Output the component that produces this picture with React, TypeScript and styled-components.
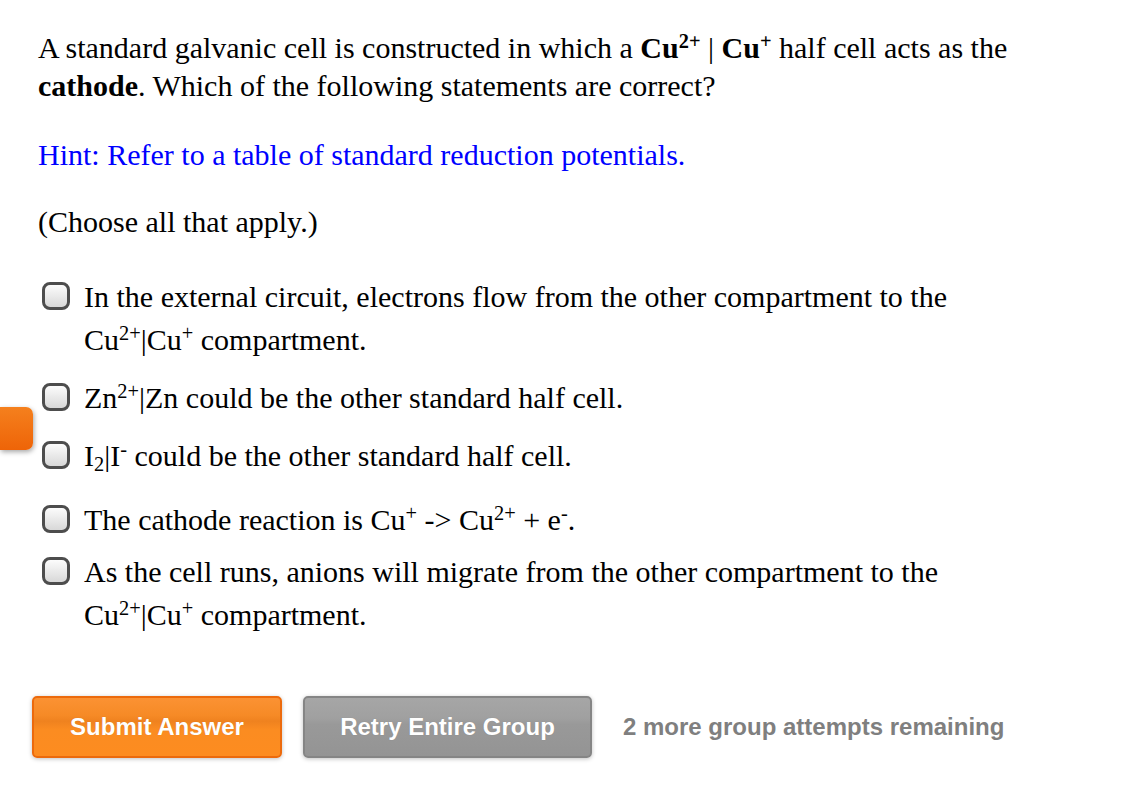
import React from "react";
import styled, { createGlobalStyle } from "styled-components";

const Global = createGlobalStyle`
  html, body { margin: 0; padding: 0; background: #fff; }
  body { font-family: "Liberation Serif", "Times New Roman", serif; color: #000; }
`;

const Page = styled.div`
  position: relative;
  width: 1129px;
  min-height: 804px;
  padding: 29px 0 0 38px;
  box-sizing: border-box;
`;

const Content = styled.div`
  width: 1005px;
  font-size: 30px;
`;

const Para = styled.p<{ $color?: string; $mt?: number }>`
  margin: ${(p) => p.$mt ?? 0}px 0 0 0;
  line-height: 38px;
  color: ${(p) => p.$color ?? "#000"};
`;

const Sup = styled.sup`
  font-size: 0.68em;
  line-height: 0;
  vertical-align: 0.5em;
`;

const Sub = styled.sub`
  font-size: 0.68em;
  line-height: 0;
  vertical-align: -0.25em;
`;

const Options = styled.div`
  display: flex;
  flex-direction: column;
  gap: 15px;
  margin-top: 34px;
`;

const Option = styled.label<{ $mt?: number }>`
  display: flex;
  align-items: flex-start;
  gap: 14px;
  margin-left: 4px;
  margin-top: ${(p) => p.$mt ?? 0}px;
  line-height: 43px;
`;

const Box = styled.span`
  flex: none;
  width: 28px;
  height: 28px;
  margin-top: 7px;
  box-sizing: border-box;
  border: 3px solid #4d4d4d;
  border-radius: 8px;
  background: linear-gradient(#fcfcfc, #d8d8d8);
`;

const OptText = styled.span`
  flex: 1;
`;

const Actions = styled.div`
  display: flex;
  align-items: center;
  margin-top: 60px;
  margin-left: -6px;
`;

const Button = styled.button<{ $variant: "orange" | "gray"; $w: number }>`
  width: ${(p) => p.$w}px;
  height: 62px;
  border-radius: 5px;
  font-family: "Liberation Sans", Arial, sans-serif;
  font-weight: bold;
  font-size: 24px;
  color: #fff;
  cursor: pointer;
  box-shadow: 0 1px 4px rgba(0, 0, 0, 0.25);
  text-shadow: 0 0 1px rgba(0, 0, 0, 0.15);
  border: 2px solid ${(p) => (p.$variant === "orange" ? "#ec6a0c" : "#858585")};
  background: ${(p) =>
    p.$variant === "orange"
      ? "linear-gradient(#fb9233 0%, #f68a26 30%, #ef821f 40%, #fb8c21 55%, #fd8c20 100%)"
      : "linear-gradient(#a6a6a6 0%, #a0a0a0 35%, #999 45%, #949494 100%)"};
  margin-right: ${(p) => (p.$variant === "orange" ? 21 : 31)}px;
`;

const Remaining = styled.span`
  font-family: "Liberation Sans", Arial, sans-serif;
  font-weight: bold;
  font-size: 24px;
  color: #7f7f7f;
`;

const SideTab = styled.div`
  position: absolute;
  left: 0;
  top: 407px;
  width: 33px;
  height: 43px;
  border-radius: 0 7px 7px 0;
  background: linear-gradient(#f5801d, #ee6408);
  box-shadow: 1px 2px 5px rgba(0, 0, 0, 0.35);
`;

export default function App() {
  return (
    <Page>
      <Global />
      <SideTab />
      <Content>
        <Para>
          A standard galvanic cell is constructed in which a{" "}
          <b>
            Cu<Sup>2+</Sup>
          </b>{" "}
          |{" "}
          <b>
            Cu<Sup>+</Sup>
          </b>{" "}
          half cell acts as the <b>cathode</b>. Which of the following statements are correct?
        </Para>
        <Para $color="#0000ff" $mt={31}>
          Hint: Refer to a table of standard reduction potentials.
        </Para>
        <Para $mt={29}>(Choose all that apply.)</Para>
        <Options>
          <Option>
            <Box />
            <OptText>
              In the external circuit, electrons flow from the other compartment to the Cu<Sup>2+</Sup>|Cu
              <Sup>+</Sup> compartment.
            </OptText>
          </Option>
          <Option>
            <Box />
            <OptText>
              Zn<Sup>2+</Sup>|Zn could be the other standard half cell.
            </OptText>
          </Option>
          <Option>
            <Box />
            <OptText>
              I<Sub>2</Sub>|I<Sup>-</Sup> could be the other standard half cell.
            </OptText>
          </Option>
          <Option $mt={6}>
            <Box />
            <OptText>
              The cathode reaction is Cu<Sup>+</Sup> -&gt; Cu<Sup>2+</Sup> + e<Sup>-</Sup>.
            </OptText>
          </Option>
          <Option $mt={-6}>
            <Box />
            <OptText>
              As the cell runs, anions will migrate from the other compartment to the Cu<Sup>2+</Sup>|Cu
              <Sup>+</Sup> compartment.
            </OptText>
          </Option>
        </Options>
        <Actions>
          <Button $variant="orange" $w={250}>
            Submit Answer
          </Button>
          <Button $variant="gray" $w={289}>
            Retry Entire Group
          </Button>
          <Remaining>2 more group attempts remaining</Remaining>
        </Actions>
      </Content>
    </Page>
  );
}
